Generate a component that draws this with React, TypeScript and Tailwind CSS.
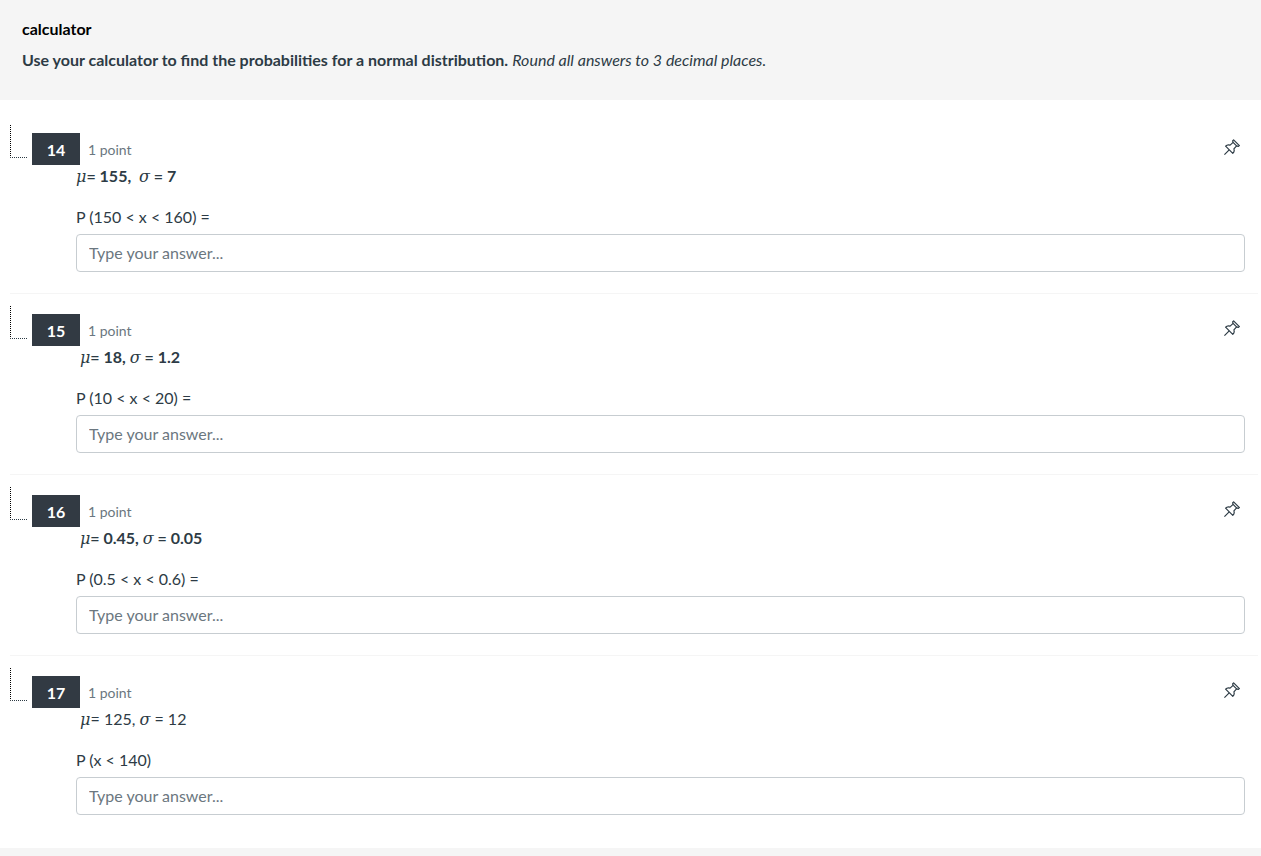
import type { ReactNode } from 'react';

interface Question {
  number: number;
  given: ReactNode;
  prompt: string;
}

function Sym({ children }: { children: ReactNode }) {
  return <i className="font-['DejaVu_Serif',serif] text-[16px] leading-none font-normal">{children}</i>;
}

const questions: Question[] = [
  { number: 14, given: <b><Sym>μ</Sym>= 155,&nbsp; <Sym>σ</Sym> = 7</b>, prompt: 'P (150 < x < 160) =' },
  { number: 15, given: <b>&nbsp;<Sym>μ</Sym>= 18, <Sym>σ</Sym> = 1.2</b>, prompt: 'P (10 < x < 20) =' },
  { number: 16, given: <b>&nbsp;<Sym>μ</Sym>= 0.45, <Sym>σ</Sym> = 0.05</b>, prompt: 'P (0.5 < x < 0.6) =' },
  { number: 17, given: <>&nbsp;<Sym>μ</Sym>= 125, <Sym>σ</Sym> = 12</>, prompt: 'P (x < 140)' },
];

function PinIcon() {
  return (
    <svg className="w-4 h-4" viewBox="0 0 16 16" fill="none" stroke="currentColor" strokeLinejoin="round" aria-hidden="true">
      <path d="M9.6.8 15.4 6.6 14.2 7.4 12.6 6.9 9.9 9.9C10.6 11.9 10.2 13.2 8.8 14.4L1.6 7.2C2.8 5.8 4.1 5.4 6.1 6.1L9.1 3.4 8.6 1.8Z" strokeWidth="1.2" />
      <path d="M9.1 3.4 12.6 6.9M5.2 10.8.4 15.6" strokeWidth="1.2" />
    </svg>
  );
}

function QuestionRow({ number, given, prompt }: Question) {
  const id = `answer-${number}`;
  return (
    <section className="ml-[10px] mr-[3px] pt-3 pb-[21px] border-b border-[#f5f5f5] last:border-b-0 last:pb-[33px]">
      <div className="flex items-start">
        <div className="w-[17px] h-[33px] border-l border-b border-dotted border-l-black border-b-[#2d3b45]" />
        <h2 className="mt-2 ml-[5px] w-12 h-8 pt-[2px] flex items-center justify-center bg-[#323a43] text-white font-bold">
          {number}
        </h2>
        <span className="mt-[15px] ml-2 text-[14px] leading-5 text-[#6b7780]">1 point</span>
        <button type="button" aria-label={`Pin question ${number}`} className="mt-[14px] ml-auto mr-[18px]">
          <PinIcon />
        </button>
      </div>
      <div className="pl-[66px] pr-[13px]">
        <p className="h-6 leading-[22px]">{given}</p>
        <label htmlFor={id} className="block mt-4 mb-[5px]">{prompt}</label>
        <input
          id={id}
          type="text"
          placeholder="Type your answer..."
          className="block w-full h-[38px] px-3 pb-[2px] rounded-[4px] border border-[#c7cdd1] bg-white placeholder:text-[#6b7780]"
        />
      </div>
    </section>
  );
}

export default function App() {
  return (
    <div className="min-h-screen bg-[#f5f5f5] font-['Lato',sans-serif] text-[16px] leading-6 text-[#2d3b45]">
      <header className="px-[22px] pt-[17px] pb-7">
        <h1 className="font-bold text-black">calculator</h1>
        <p className="mt-[7px]">
          <b>Use your calculator to find the probabilities for a normal distribution.</b>{' '}
          <i>Round all answers to 3 decimal places.</i>
        </p>
      </header>
      <main className="bg-white pt-[13px]">
        {questions.map((q) => (
          <QuestionRow key={q.number} {...q} />
        ))}
      </main>
    </div>
  );
}
